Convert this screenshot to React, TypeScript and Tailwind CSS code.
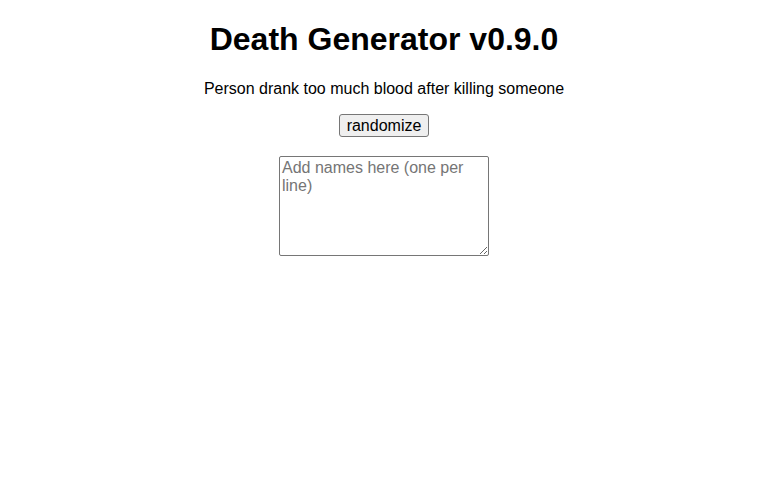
export default function App() {
  return (
    <div className="flex flex-col items-center bg-white text-black font-['Liberation_Sans',Arial,sans-serif]">
      <h1 className="mt-[21px] text-[32px] leading-[37px] font-bold">Death Generator v0.9.0</h1>
      <p className="mt-[22px] text-base leading-[18px]">Person drank too much blood after killing someone</p>
      <button className="mt-4 h-[23px] w-[90px] rounded-[3px] border border-[#767676] bg-[#efefef] px-1.5 text-base leading-[18px] text-black">
        randomize
      </button>
      <textarea
        placeholder="Add names here (one per line)"
        className="mt-[19px] h-[100px] w-[210px] rounded-[2px] border border-[#767676] p-0.5 text-base leading-[18px] placeholder:text-[#757575] font-['Liberation_Sans',Arial,sans-serif]"
      />
    </div>
  );
}
